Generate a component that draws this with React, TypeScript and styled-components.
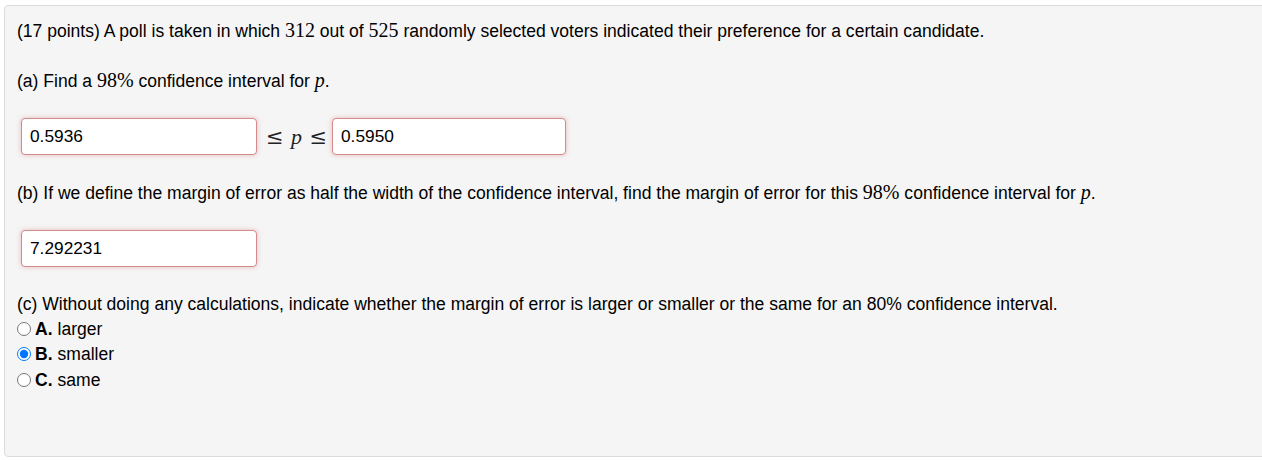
import React from 'react';
import styled, { createGlobalStyle } from 'styled-components';

const GlobalStyle = createGlobalStyle`
  html, body {
    margin: 0;
    padding: 0;
    background: #ffffff;
  }
  body {
    font-family: "Liberation Sans", Arial, sans-serif;
    font-size: 17.55px;
    color: #000;
  }
`;

const Panel = styled.div`
  margin: 5px 0 0 4px;
  width: 1275px;
  height: 452px;
  box-sizing: border-box;
  background: #f5f5f5;
  border: 1px solid #dcdcdc;
  border-radius: 4px;
  padding: 14px 12px 0 12px;
`;

const Line = styled.div<{ $top?: number }>`
  height: 20px;
  line-height: 20px;
  margin-top: ${(p) => p.$top ?? 0}px;
  white-space: nowrap;
`;

const M = styled.span`
  font-family: "Liberation Serif", "Times New Roman", serif;
  font-size: 20px;
`;

const Var = styled(M)`
  font-style: italic;
`;

const AnswerRow = styled.div<{ $top: number }>`
  display: flex;
  align-items: center;
  margin-top: ${(p) => p.$top}px;
  margin-left: 4px;
  height: 37px;
`;

const Answer = styled.div<{ $w?: number }>`
  width: ${(p) => p.$w ?? 236}px;
  height: 37px;
  box-sizing: border-box;
  background: #fff;
  border: 1px solid #d38b8b;
  border-radius: 4px;
  box-shadow: 0 0 5px rgba(210, 80, 80, 0.35);
  padding: 0 8px;
  display: flex;
  align-items: center;
  font-size: 17.3px;
`;

const Between = styled.span`
  font-family: "DejaVu Serif", "Liberation Serif", serif;
  font-size: 21px;
  margin: 0 5px 0 9px;
  width: 61px;
  display: flex;
  align-items: center;
  justify-content: space-between;
  color: #222;

  i {
    font-family: "Liberation Serif", "Times New Roman", serif;
    font-size: 22px;
  }
`;

const Options = styled.div`
  margin-top: 2px;
  display: flex;
  flex-direction: column;
`;

const Option = styled.label`
  display: flex;
  align-items: center;
  height: 25.5px;
  line-height: 20px;
`;

const Radio = styled.input`
  width: 14px;
  height: 14px;
  margin: 0 4px 0 0;
`;

const Key = styled.b`
  margin-right: 5px;
`;

const choices = [
  { key: 'A.', text: 'larger', checked: false },
  { key: 'B.', text: 'smaller', checked: true },
  { key: 'C.', text: 'same', checked: false },
];

export default function App() {
  return (
    <>
      <GlobalStyle />
      <Panel>
        <Line>
          (17 points) A poll is taken in which <M>312</M> out of <M>525</M> randomly selected voters
          indicated their preference for a certain candidate.
        </Line>
        <Line $top={30}>
          (a) Find a <M>98%</M> confidence interval for <Var>p</Var>.
        </Line>
        <AnswerRow $top={28}>
          <Answer>0.5936</Answer>
          <Between>
            <span>≤</span>
            <i>p</i>
            <span>≤</span>
          </Between>
          <Answer $w={234}>0.5950</Answer>
        </AnswerRow>
        <Line $top={27}>
          (b) If we define the margin of error as half the width of the confidence interval, find the
          margin of error for this <M>98%</M> confidence interval for <Var>p</Var>.
        </Line>
        <AnswerRow $top={28}>
          <Answer>7.292231</Answer>
        </AnswerRow>
        <Line $top={27}>
          (c) Without doing any calculations, indicate whether the margin of error is larger or
          smaller or the same for an 80% confidence interval.
        </Line>
        <Options>
          {choices.map((c) => (
            <Option key={c.key}>
              <Radio type="radio" name="c" defaultChecked={c.checked} />
              <Key>{c.key}</Key>
              {c.text}
            </Option>
          ))}
        </Options>
      </Panel>
    </>
  );
}
